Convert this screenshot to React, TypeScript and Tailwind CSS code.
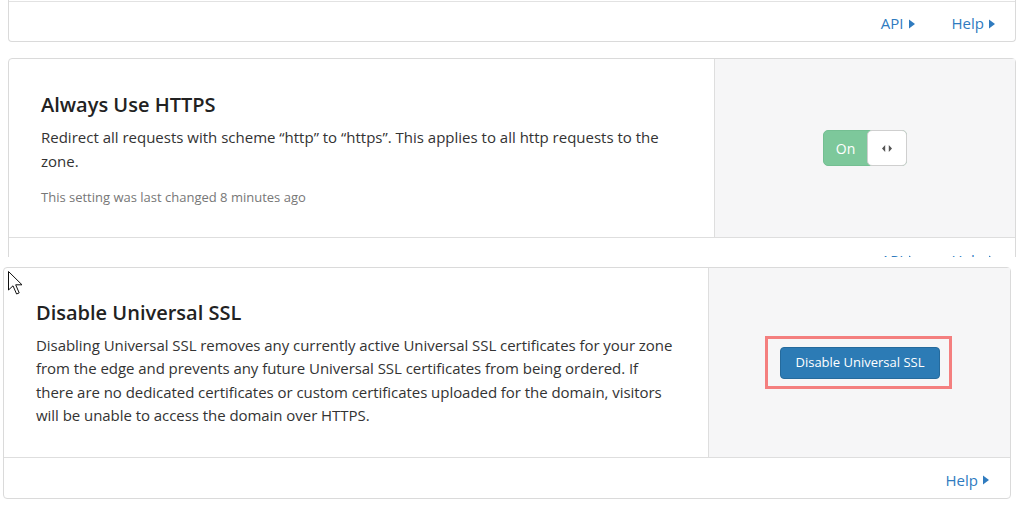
import React from "react";

const Caret = () => (
  <svg width="6" height="10" viewBox="0 0 6 10" className="ml-[5px]">
    <path d="M0 0.5 L6 5 L0 9.5 Z" fill="#2f7bbf" />
  </svg>
);

const FooterLink = ({ label }: { label: string }) => (
  <span className="flex items-center text-[15px] text-[#2f7bbf]">
    {label}
    <Caret />
  </span>
);

const Toggle = () => (
  <div className="flex h-[36px] w-[84px] rounded-[5px] border border-[#74bf92] bg-[#7dc89b]">
    <div className="flex w-[43px] items-center justify-center text-[14px] text-white">On</div>
    <div className="-my-px -mr-px flex flex-1 items-center justify-center rounded-[5px] border border-[#cfcfcf] bg-white">
      <svg width="10" height="7" viewBox="0 0 10 7">
        <path d="M3.2 0 L0 3.5 L3.2 7 Z M6.8 0 L10 3.5 L6.8 7 Z" fill="#555" />
      </svg>
    </div>
  </div>
);

const Cursor = () => (
  <svg
    width="17"
    height="25"
    viewBox="0 0 17 25"
    className="absolute left-[8px] top-[271px]"
  >
    <path
      d="M0.5 0.5 L0.5 19 L5 14.8 L8.6 23 L11.2 21.9 L7.7 13.8 L14 13.8 Z"
      fill="#fff"
      stroke="#111"
      strokeWidth="1"
      strokeLinejoin="round"
    />
  </svg>
);

export default function App() {
  return (
    <div className="relative h-[512px] w-[1024px] overflow-hidden bg-white font-['Open_Sans',sans-serif]">
      {/* top card, only its footer shows */}
      <div className="ml-[8px] h-[42px] w-[1008px] rounded-b-[4px] border-x border-b border-[#dadada]">
        <div className="h-px" />
        <div className="flex h-[40px] items-center justify-end gap-[37px] border-t border-[#e2e2e2] pr-[20px] pt-[4px]">
          <FooterLink label="API" />
          <FooterLink label="Help" />
        </div>
      </div>

      {/* Always Use HTTPS, clipped by the pasted card below */}
      <div className="mt-[16px] h-[199px] overflow-hidden">
        <div className="ml-[8px] w-[1008px] rounded-[4px] border border-[#dadada]">
          <div className="flex h-[179px] border-b border-[#dedede]">
            <div className="w-[705px] pl-[32px] pt-[32px] text-[#333]">
              <h2 className="text-[20px] font-semibold leading-[28px] text-[#222]">
                Always Use HTTPS
              </h2>
              <p className="mt-[6px] whitespace-nowrap text-[15px] leading-[24px]">
                Redirect all requests with scheme “http” to “https”. This applies to all http requests to the
                <br />
                zone.
              </p>
              <p className="mt-[14px] text-[13px] leading-[20px] text-[#777]">
                This setting was last changed 8 minutes ago
              </p>
            </div>
            <div className="flex flex-1 items-center justify-center border-l border-[#dedede] bg-[#f6f6f7]">
              <Toggle />
            </div>
          </div>
          <div className="flex h-[40px] items-center justify-end gap-[37px] pr-[20px] pt-[4px]">
            <FooterLink label="API" />
            <FooterLink label="Help" />
          </div>
        </div>
      </div>

      {/* Disable Universal SSL */}
      <div className="pt-[10px]">
        <div className="ml-[3px] w-[1008px] rounded-[4px] border border-[#dadada]">
          <div className="flex h-[190px] border-b border-[#dedede]">
            <div className="w-[704px] pl-[32px] pt-[31px] text-[#333]">
              <h2 className="text-[20px] font-semibold leading-[28px] text-[#222]">
                Disable Universal SSL
              </h2>
              <p className="mt-[7px] whitespace-nowrap text-[15px] leading-[23.4px] tracking-[-0.05px]">
                Disabling Universal SSL removes any currently active Universal SSL certificates for your zone
                <br />
                from the edge and prevents any future Universal SSL certificates from being ordered. If
                <br />
                there are no dedicated certificates or custom certificates uploaded for the domain, visitors
                <br />
                will be unable to access the domain over HTTPS.
              </p>
            </div>
            <div className="flex flex-1 items-center justify-center border-l border-[#dedede] bg-[#f6f6f7]">
              <div className="ml-[-2px] border-[3px] border-[#f47f7f] pb-[7px] pl-[12px] pr-[9px] pt-[8px]">
                <button className="flex h-[32px] w-[160px] items-center justify-center rounded-[4px] border border-[#256a9c] bg-[#2c7bb5] text-[13px] text-white">
                  Disable Universal SSL
                </button>
              </div>
            </div>
          </div>
          <div className="flex h-[40px] items-center justify-end pr-[21px] pt-[4px]">
            <FooterLink label="Help" />
          </div>
        </div>
      </div>

      <Cursor />
    </div>
  );
}
